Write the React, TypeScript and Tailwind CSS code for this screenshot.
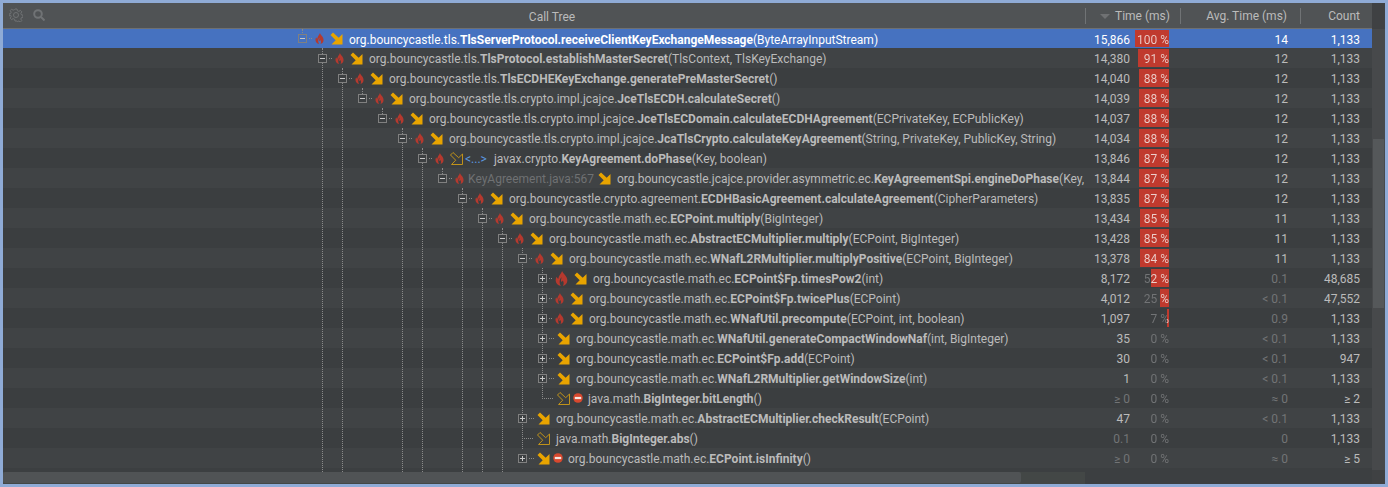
type Row = {
    depth: number;
    box?: 'minus' | 'plus';
    flame?: 'small' | 'big';
    arrow: 'solid' | 'hollow';
    stop?: boolean;
    prefix?: string;
    line?: string;
    pkg: string;
    method: string;
    args: string;
    time: string;
    timeDim?: boolean;
    pct: number;
    barWidth: number;
    avg: string;
    avgDim?: boolean;
    count: string;
};

const rows: Row[] = [
    { depth: 0, box: 'minus', flame: 'small', arrow: 'solid', pkg: 'org.bouncycastle.tls.', method: 'TlsServerProtocol.receiveClientKeyExchangeMessage', args: '(ByteArrayInputStream)', time: '15,866', pct: 100, barWidth: 34, avg: '14', count: '1,133' },
    { depth: 1, box: 'minus', flame: 'small', arrow: 'solid', pkg: 'org.bouncycastle.tls.', method: 'TlsProtocol.establishMasterSecret', args: '(TlsContext, TlsKeyExchange)', time: '14,380', pct: 91, barWidth: 31, avg: '12', count: '1,133' },
    { depth: 2, box: 'minus', flame: 'small', arrow: 'solid', pkg: 'org.bouncycastle.tls.', method: 'TlsECDHEKeyExchange.generatePreMasterSecret', args: '()', time: '14,040', pct: 88, barWidth: 30, avg: '12', count: '1,133' },
    { depth: 3, box: 'minus', flame: 'small', arrow: 'solid', pkg: 'org.bouncycastle.tls.crypto.impl.jcajce.', method: 'JceTlsECDH.calculateSecret', args: '()', time: '14,039', pct: 88, barWidth: 30, avg: '12', count: '1,133' },
    { depth: 4, box: 'minus', flame: 'small', arrow: 'solid', pkg: 'org.bouncycastle.tls.crypto.impl.jcajce.', method: 'JceTlsECDomain.calculateECDHAgreement', args: '(ECPrivateKey, ECPublicKey)', time: '14,037', pct: 88, barWidth: 30, avg: '12', count: '1,133' },
    { depth: 5, box: 'minus', flame: 'small', arrow: 'solid', pkg: 'org.bouncycastle.tls.crypto.impl.jcajce.', method: 'JcaTlsCrypto.calculateKeyAgreement', args: '(String, PrivateKey, PublicKey, String)', time: '14,034', pct: 88, barWidth: 30, avg: '12', count: '1,133' },
    { depth: 6, box: 'minus', flame: 'small', arrow: 'hollow', prefix: '<...>', pkg: 'javax.crypto.', method: 'KeyAgreement.doPhase', args: '(Key, boolean)', time: '13,846', pct: 87, barWidth: 30, avg: '12', count: '1,133' },
    { depth: 7, box: 'minus', flame: 'small', arrow: 'solid', line: 'KeyAgreement.java:567', pkg: 'org.bouncycastle.jcajce.provider.asymmetric.ec.', method: 'KeyAgreementSpi.engineDoPhase', args: '(Key,', time: '13,844', pct: 87, barWidth: 30, avg: '12', count: '1,133' },
    { depth: 8, box: 'minus', flame: 'small', arrow: 'solid', pkg: 'org.bouncycastle.crypto.agreement.', method: 'ECDHBasicAgreement.calculateAgreement', args: '(CipherParameters)', time: '13,835', pct: 87, barWidth: 30, avg: '12', count: '1,133' },
    { depth: 9, box: 'minus', flame: 'small', arrow: 'solid', pkg: 'org.bouncycastle.math.ec.', method: 'ECPoint.multiply', args: '(BigInteger)', time: '13,434', pct: 85, barWidth: 29, avg: '11', count: '1,133' },
    { depth: 10, box: 'minus', flame: 'small', arrow: 'solid', pkg: 'org.bouncycastle.math.ec.', method: 'AbstractECMultiplier.multiply', args: '(ECPoint, BigInteger)', time: '13,428', pct: 85, barWidth: 29, avg: '11', count: '1,133' },
    { depth: 11, box: 'minus', flame: 'small', arrow: 'solid', pkg: 'org.bouncycastle.math.ec.', method: 'WNafL2RMultiplier.multiplyPositive', args: '(ECPoint, BigInteger)', time: '13,378', pct: 84, barWidth: 29, avg: '11', count: '1,133' },
    { depth: 12, box: 'plus', flame: 'big', arrow: 'solid', pkg: 'org.bouncycastle.math.ec.', method: 'ECPoint$Fp.timesPow2', args: '(int)', time: '8,172', pct: 52, barWidth: 18, avg: '0.1', avgDim: true, count: '48,685' },
    { depth: 12, box: 'plus', flame: 'small', arrow: 'solid', pkg: 'org.bouncycastle.math.ec.', method: 'ECPoint$Fp.twicePlus', args: '(ECPoint)', time: '4,012', pct: 25, barWidth: 9, avg: '< 0.1', avgDim: true, count: '47,552' },
    { depth: 12, box: 'plus', flame: 'small', arrow: 'solid', pkg: 'org.bouncycastle.math.ec.', method: 'WNafUtil.precompute', args: '(ECPoint, int, boolean)', time: '1,097', pct: 7, barWidth: 2, avg: '0.9', avgDim: true, count: '1,133' },
    { depth: 12, box: 'plus', arrow: 'solid', pkg: 'org.bouncycastle.math.ec.', method: 'WNafUtil.generateCompactWindowNaf', args: '(int, BigInteger)', time: '35', pct: 0, barWidth: 0, avg: '< 0.1', avgDim: true, count: '1,133' },
    { depth: 12, box: 'plus', arrow: 'solid', pkg: 'org.bouncycastle.math.ec.', method: 'ECPoint$Fp.add', args: '(ECPoint)', time: '30', pct: 0, barWidth: 0, avg: '< 0.1', avgDim: true, count: '947' },
    { depth: 12, box: 'plus', arrow: 'solid', pkg: 'org.bouncycastle.math.ec.', method: 'WNafL2RMultiplier.getWindowSize', args: '(int)', time: '1', pct: 0, barWidth: 0, avg: '< 0.1', avgDim: true, count: '1,133' },
    { depth: 12, arrow: 'hollow', stop: true, pkg: 'java.math.', method: 'BigInteger.bitLength', args: '()', time: '≥ 0', timeDim: true, pct: 0, barWidth: 0, avg: '≈ 0', avgDim: true, count: '≥ 2' },
    { depth: 11, box: 'plus', arrow: 'solid', pkg: 'org.bouncycastle.math.ec.', method: 'AbstractECMultiplier.checkResult', args: '(ECPoint)', time: '47', pct: 0, barWidth: 0, avg: '< 0.1', avgDim: true, count: '1,133' },
    { depth: 11, arrow: 'hollow', pkg: 'java.math.', method: 'BigInteger.abs', args: '()', time: '0.1', timeDim: true, pct: 0, barWidth: 0, avg: '0', avgDim: true, count: '1,133' },
    { depth: 11, box: 'plus', arrow: 'solid', stop: true, pkg: 'org.bouncycastle.math.ec.', method: 'ECPoint.isInfinity', args: '()', time: '≥ 0', timeDim: true, pct: 0, barWidth: 0, avg: '≈ 0', avgDim: true, count: '≥ 5' },
];

// vertical dotted tree guides: x inside the tree, first and last y inside the body
const guides = [
    [299, 0, 4],
    [319, 19, 443],
    [339, 39, 443],
    [359, 59, 65],
    [379, 79, 85],
    [399, 99, 443],
    [419, 119, 443],
    [439, 139, 145],
    [459, 159, 443],
    [479, 179, 443],
    [499, 199, 443],
    [519, 219, 420],
    [539, 239, 370],
];

const FlameIcon = ({ big }: { big?: boolean }) => (
    <svg width={big ? 13 : 9} height={big ? 15 : 11} viewBox="0 0 10 11" className="shrink-0" preserveAspectRatio="none">
        <path fill="#b5392e" d="M5.500 0C6 2 9.500 3.500 9.500 7c0 2.200-1.500 3.500-3.500 4 .8-1 1-2.500 0-4-.5 1-1.200 1.200-1.400.6C4.400 6.500 5 5.500 5 4.500 3.500 6 3 8.500 4.500 11 2 10.500.5 9 .5 6.800c0-1 .3-1.800.8-2.500.2.800.6 1.300 1.200 1.500C2.700 3.500 4.700 2 5.500 0z" />
    </svg>
);

const CallArrow = ({ hollow }: { hollow?: boolean }) => (
    <svg width="13" height="13" viewBox="0 0 13 13" className="shrink-0">
        <path
            d="M.5 3 3 .5 8.700 5.700 12.500 2V12.500H1.500L5.700 8.200z"
            fill={hollow ? 'none' : '#e8a400'}
            stroke={hollow ? '#c0921a' : 'none'}
        />
    </svg>
);

const StopIcon = () => (
    <svg width="10" height="10" viewBox="0 0 10 10" className="shrink-0">
        <circle cx="5" cy="5" r="4.800" fill="#d8482e" />
        <rect x="1.800" y="3.900" width="6.400" height="2.200" fill="#f4e4e0" />
    </svg>
);

const ExpandBox = ({ kind, selected }: { kind: 'minus' | 'plus'; selected: boolean }) => (
    <svg width="9" height="9" viewBox="0 0 9 9" className="shrink-0">
        <rect x=".5" y=".5" width="8" height="8" fill={selected ? 'none' : '#3c3f41'} stroke="#808080" />
        <path d="M2 4.500h5" stroke="#c8c8c8" />
        {kind === 'plus' && <path d="M4.500 2v5" stroke="#c8c8c8" />}
    </svg>
);

const Dots = ({ width }: { width: number }) => (
    <span className="shrink-0 border-t border-dotted border-[#8a8a8a] h-0" style={{ width }} />
);

const TreeCell = ({ row, selected }: { row: Row; selected: boolean }) => {
    const textColor = selected ? 'text-white' : 'text-[#bbbbbb]';
    // box sits 4px left of its guide, leaf rows start right on the parent guide
    const indent = 295 + row.depth * 20 + (row.box ? 0 : 4);
    return (
        <div className="relative z-10 flex items-center h-full whitespace-nowrap overflow-hidden" style={{ paddingLeft: indent }}>
            {row.box ? (
                <>
                    <ExpandBox kind={row.box} selected={selected} />
                    <span className="flex ml-[2px] mr-[3px]">
                        <Dots width={row.flame ? 3 : 5} />
                    </span>
                </>
            ) : (
                <span className="flex mr-[4px]">
                    <Dots width={11} />
                </span>
            )}
            {row.flame && (
                <span className={`flex ${row.line ? 'mr-[4px]' : 'mr-[6px]'}`}>
                    <FlameIcon big={row.flame === 'big'} />
                </span>
            )}
            {row.line && <span className="w-[130px] shrink-0 pt-[2px] text-[#6f7173]">{row.line}</span>}
            <CallArrow hollow={row.arrow === 'hollow'} />
            {row.stop && (
                <span className="flex ml-[3px] mr-[-1px]">
                    <StopIcon />
                </span>
            )}
            {row.prefix && <span className="w-[29px] shrink-0 ml-[2px] mr-[-6px] pt-[2px] text-[#5c9ae0]">{row.prefix}</span>}
            <span className={`ml-[6px] pt-[2px] ${textColor}`}>
                {row.pkg}
                <span className="font-bold">{row.method}</span>
                {row.args}
            </span>
        </div>
    );
};

const dim = '#727476';
const onBar = '#ecd0cc';

// the label changes colour where the red bar runs behind it
const TimeBar = ({ pct, barWidth }: { pct: number; barWidth: number }) => (
    <div className="relative w-[39px] h-full flex items-center justify-end">
        {barWidth > 0 && <span className="absolute right-0 top-[1px] bottom-[1px] bg-[#c03a2e]" style={{ width: barWidth }} />}
        <span
            className="relative pt-[2px] whitespace-nowrap bg-clip-text text-transparent"
            style={{ backgroundImage: `linear-gradient(to left, ${onBar} ${barWidth}px, ${dim} ${barWidth}px)` }}
        >
            {pct} %
        </span>
    </div>
);

const App = () => {
    return (
        <div className="w-[1388px] h-[487px] bg-[#3c3f41] border-[3px] border-[#8fabd6] overflow-hidden text-[12px] text-[#bbbbbb] [font-family:Roboto,sans-serif]">
            <div className="flex h-full">
                <div className="flex flex-col w-[1369px]">
                    {/* Header */}
                    <div className="flex items-center h-[26px] shrink-0 bg-[#505355] border-b border-[#6e7072]">
                        <div className="relative w-[1082px] h-full flex items-center justify-center pl-[16px] pt-[2px]">
                            <div className="absolute left-[6px] top-[5px] flex items-center gap-[10px] text-[#707375]">
                                <svg width="14" height="14" viewBox="0 0 14 14" fill="none" stroke="currentColor">
                                    <circle cx="7" cy="7" r="2.500" />
                                    <path d="M6 1h2l.4 1.800 1.500.6 1.500-1 1.400 1.400-1 1.500.6 1.500 1.600.4v2l-1.600.4-.6 1.500 1 1.500-1.400 1.400-1.500-1-1.500.6L8 13H6l-.4-1.800-1.500-.6-1.500 1-1.400-1.400 1-1.500-.6-1.500L0 8V6l1.600-.4.600-1.500-1-1.500 1.400-1.400 1.500 1 1.500-.6z" />
                                </svg>
                                <svg width="12" height="12" viewBox="0 0 12 12" fill="none" stroke="currentColor" strokeWidth="2">
                                    <circle cx="5" cy="5" r="3.800" />
                                    <path d="M8 8l3.500 3.500" />
                                </svg>
                            </div>
                            <span>Call Tree</span>
                        </div>
                        <div className="w-[95px] h-[16px] border-l border-[#707375] flex items-center pl-[14px] gap-[5px] pt-[1px]">
                            <span className="w-0 h-0 border-x-[5px] border-x-transparent border-t-[5px] border-t-[#6f7173]" />
                            <span>Time (ms)</span>
                        </div>
                        <div className="w-[120px] h-[16px] border-l border-[#707375] flex items-center justify-end pr-[13px] pt-[1px]">Avg. Time (ms)</div>
                        <div className="flex-1 h-[16px] border-l border-[#707375] flex items-center justify-end pr-[12px] pt-[1px]">Count</div>
                    </div>

                    {/* Body */}
                    <div className="relative flex-1 overflow-hidden">
                        {rows.map((row, i) => {
                            const selected = i === 0;
                            const stripe = selected ? 'bg-[#4672c0]' : i % 2 ? 'bg-[#404345]' : 'bg-[#3b3e40]';
                            const height = selected ? 'h-[19px]' : 'h-[20px]';
                            const bright = selected ? 'text-white' : 'text-[#bbbbbb]';
                            return (
                                <div key={i} className={`flex items-center ${height} ${stripe}`}>
                                    <div className="w-[1082px] h-full shrink-0">
                                        <TreeCell row={row} selected={selected} />
                                    </div>
                                    <div className={`w-[45px] pt-[2px] text-right ${row.timeDim ? 'text-[#727476]' : bright}`}>{row.time}</div>
                                    <TimeBar pct={row.pct} barWidth={row.barWidth} />
                                    <div className={`w-[119px] pt-[2px] text-right ${row.avgDim ? 'text-[#727476]' : bright}`}>{row.avg}</div>
                                    <div className={`w-[72px] pt-[2px] text-right ${bright}`}>{row.count}</div>
                                </div>
                            );
                        })}
                        {guides.map(([x, top, bottom]) => (
                            <span
                                key={x}
                                className="absolute w-0 border-l border-dotted border-[#8a8a8a]"
                                style={{ left: x, top, height: bottom - top }}
                            />
                        ))}
                    </div>

                    {/* Horizontal scrollbar */}
                    <div className="flex h-[12px] shrink-0">
                        <div className="w-[1082px] bg-[#434746]">
                            <div className="w-[1018px] h-[11px] rounded-[2px] bg-[#505355]" />
                        </div>
                    </div>
                </div>

                {/* Vertical scrollbar */}
                <div className="flex-1 flex flex-col bg-[#3f4143]">
                    <div className="h-[26px] shrink-0" />
                    <div className="flex-1 bg-[#47494b] pt-[110px]">
                        <div className="h-[169px] mx-[1px] bg-[#55585a]" />
                    </div>
                    <div className="h-[14px] shrink-0" />
                </div>
            </div>
        </div>
    );
};

export default App;
